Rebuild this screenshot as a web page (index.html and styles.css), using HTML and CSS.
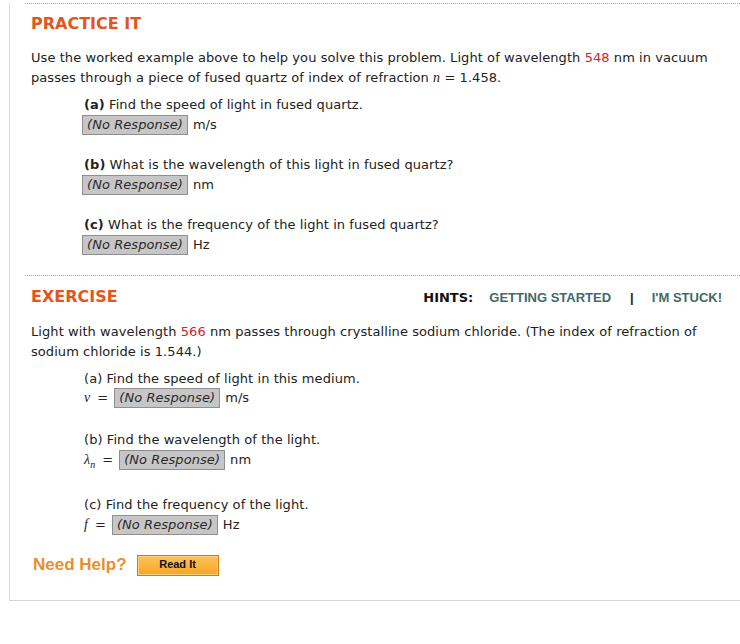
FILE: index.html
```html
<!DOCTYPE html>
<html>
<head>
<meta charset="utf-8">
<link rel="stylesheet" href="styles.css">
</head>
<body>
<div class="outer">
  <div class="section practice">
    <h2 class="heading">PRACTICE IT</h2>
    <p class="para">Use the worked example above to help you solve this problem. Light of wavelength <span class="red">548</span> nm in vacuum passes through a piece of fused quartz of index of refraction <i class="var">n</i> = 1.458.</p>
    <div class="part">
      <div class="q"><b>(a)</b> Find the speed of light in fused quartz.</div>
      <div class="ans"><span class="resp">(No Response)</span> m/s</div>
    </div>
    <div class="part">
      <div class="q"><b>(b)</b> What is the wavelength of this light in fused quartz?</div>
      <div class="ans"><span class="resp">(No Response)</span> nm</div>
    </div>
    <div class="part">
      <div class="q"><b>(c)</b> What is the frequency of the light in fused quartz?</div>
      <div class="ans"><span class="resp">(No Response)</span> Hz</div>
    </div>
  </div>
  <div class="section exercise">
    <div class="head-row">
      <h2 class="heading">EXERCISE</h2>
      <div class="hints"><span class="hl">HINTS:</span><a class="hint">GETTING STARTED</a><span class="sep">|</span><a class="hint">I'M STUCK!</a></div>
    </div>
    <p class="para">Light with wavelength <span class="red">566</span> nm passes through crystalline sodium chloride. (The index of refraction of sodium chloride is 1.544.)</p>
    <div class="part ex-a">
      <div class="q">(a) Find the speed of light in this medium.</div>
      <div class="ans"><i class="var">v</i><span class="eq">=</span><span class="resp">(No Response)</span> m/s</div>
    </div>
    <div class="part ex-b">
      <div class="q">(b) Find the wavelength of the light.</div>
      <div class="ans"><i class="var">λ<sub>n</sub></i><span class="eq">=</span><span class="resp">(No Response)</span> nm</div>
    </div>
    <div class="part ex-c">
      <div class="q">(c) Find the frequency of the light.</div>
      <div class="ans"><i class="var">f</i><span class="eq">=</span><span class="resp">(No Response)</span> Hz</div>
    </div>
    <div class="help">
      <span class="need">Need Help?</span>
      <span class="btn">Read It</span>
    </div>
  </div>
</div>
</body>
</html>
```
FILE: styles.css
```css
html, body {
  margin: 0;
  padding: 0;
  background: #fff;
}
body {
  font-family: "DejaVu Sans", Verdana, sans-serif;
  font-size: 13px;
  letter-spacing: 0.07px;
  color: #222;
}
.outer {
  margin-left: 9px;
  border-left: 1px solid #dcdcdc;
  border-bottom: 1px solid #d6d6d6;
  padding-left: 15px;
  padding-bottom: 25px;
  margin-top: 3px;
}
.section {
  border-top: 1px dotted #9a9a9a;
  padding-left: 6px;
}
.heading {
  margin: 0;
  font-family: "DejaVu Sans", Verdana, sans-serif;
  font-size: 16px;
  font-weight: bold;
  line-height: 20px;
  letter-spacing: 0;
  color: #e2561d;
}
.practice .heading {
  margin-top: 10px;
}
.para {
  margin: 14px 0 0 0;
  line-height: 20px;
  padding-right: 20px;
}
.exercise .para {
  margin-top: 15px;
}
.red {
  color: #d0232b;
}
.var {
  font-family: "Liberation Serif", "Times New Roman", serif;
  font-style: italic;
  font-size: 14px;
}
.var sub {
  font-size: 10px;
  line-height: 0;
}
.eq {
  margin: 0 1px 0 2px;
}
.part {
  margin-left: 53px;
  margin-top: 20px;
}
.practice .part:first-of-type {
  margin-top: 7px;
}
.q {
  line-height: 20px;
}
.ans {
  line-height: 20px;
  height: 20px;
  display: flex;
  align-items: center;
  gap: 5px;
}
.resp {
  display: inline-block;
  box-sizing: border-box;
  height: 20px;
  line-height: 18px;
  padding: 0 4px 0 4px;
  background: #c6c6c6;
  border: 1px solid #8f8f8f;
  font-style: italic;
  color: #2a2a2a;
}
.practice .part .ans {
  margin-left: -2px;
}
.practice .part:last-child {
  padding-bottom: 20px;
}
.exercise .head-row {
  display: flex;
  justify-content: space-between;
  align-items: center;
  margin-top: 11px;
  padding-right: 18px;
}
.hints {
  font-family: "Liberation Sans", Arial, sans-serif;
  font-weight: bold;
  font-size: 13px;
  letter-spacing: 0;
  display: flex;
  align-items: center;
}
.hl {
  font-family: "DejaVu Sans", Verdana, sans-serif;
  color: #111;
  margin-right: 16px;
}
.hint {
  color: #3e6b6b;
}
.sep {
  color: #222;
  margin: 0 18px 0 19px;
}
.ex-a { margin-top: 7px; }
.ex-a .ans { margin-top: -1px; }
.ex-b { margin-top: 22px; }
.ex-c { margin-top: 25px; }
.help {
  margin-top: 20px;
  display: flex;
  align-items: center;
  height: 20px;
  padding-left: 2px;
}
.need {
  font-family: "Liberation Sans", Arial, sans-serif;
  font-weight: bold;
  font-size: 17px;
  letter-spacing: 0;
  color: #e8902c;
  margin-right: 10px;
}
.btn {
  display: inline-block;
  box-sizing: border-box;
  width: 82px;
  height: 21px;
  line-height: 17px;
  text-align: center;
  font-family: "Liberation Sans", Arial, sans-serif;
  font-weight: bold;
  font-size: 11px;
  letter-spacing: 0;
  color: #111;
  background: linear-gradient(#fbc25a, #f6a623);
  border: 1px solid #d07a10;
  box-shadow: inset 0 0 0 1px #fdd080;
}
```
